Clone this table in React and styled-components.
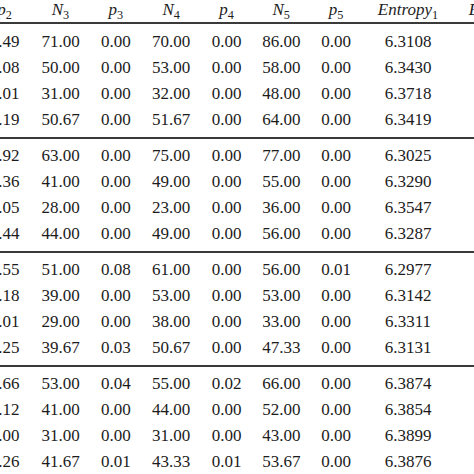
import styled, { createGlobalStyle } from 'styled-components';

const GlobalStyle = createGlobalStyle`
  html, body {
    margin: 0;
    padding: 0;
    background: #ffffff;
    overflow: hidden;
  }
`;

const columns = [
  { key: 'p2', sym: 'p', sub: '2', width: 56.5 },
  { key: 'N3', sym: 'N', sub: '3', width: 55.5 },
  { key: 'p3', sym: 'p', sub: '3', width: 55 },
  { key: 'N4', sym: 'N', sub: '4', width: 55.75 },
  { key: 'p4', sym: 'p', sub: '4', width: 55 },
  { key: 'N5', sym: 'N', sub: '5', width: 54.5 },
  { key: 'p5', sym: 'p', sub: '5', width: 55 },
  { key: 'e1', sym: 'Entropy', sub: '1', width: 89 },
  { key: 'e2', sym: 'Entropy', sub: '2', width: 93 },
];

const tableWidth = columns.reduce((s, c) => s + c.width, 0);

const groups = [
  [
    ['0.49', '71.00', '0.00', '70.00', '0.00', '86.00', '0.00', '6.3108', ''],
    ['0.08', '50.00', '0.00', '53.00', '0.00', '58.00', '0.00', '6.3430', ''],
    ['0.01', '31.00', '0.00', '32.00', '0.00', '48.00', '0.00', '6.3718', ''],
    ['0.19', '50.67', '0.00', '51.67', '0.00', '64.00', '0.00', '6.3419', ''],
  ],
  [
    ['0.92', '63.00', '0.00', '75.00', '0.00', '77.00', '0.00', '6.3025', ''],
    ['0.36', '41.00', '0.00', '49.00', '0.00', '55.00', '0.00', '6.3290', ''],
    ['0.05', '28.00', '0.00', '23.00', '0.00', '36.00', '0.00', '6.3547', ''],
    ['0.44', '44.00', '0.00', '49.00', '0.00', '56.00', '0.00', '6.3287', ''],
  ],
  [
    ['0.55', '51.00', '0.08', '61.00', '0.00', '56.00', '0.01', '6.2977', ''],
    ['0.18', '39.00', '0.00', '53.00', '0.00', '53.00', '0.00', '6.3142', ''],
    ['0.01', '29.00', '0.00', '38.00', '0.00', '33.00', '0.00', '6.3311', ''],
    ['0.25', '39.67', '0.03', '50.67', '0.00', '47.33', '0.00', '6.3131', ''],
  ],
  [
    ['0.66', '53.00', '0.04', '55.00', '0.02', '66.00', '0.00', '6.3874', ''],
    ['0.12', '41.00', '0.00', '44.00', '0.00', '52.00', '0.00', '6.3854', ''],
    ['0.00', '31.00', '0.00', '31.00', '0.00', '43.00', '0.00', '6.3899', ''],
    ['0.26', '41.67', '0.01', '43.33', '0.01', '53.67', '0.00', '6.3876', ''],
  ],
];

const Table = styled.table`
  border-collapse: collapse;
  table-layout: fixed;
  width: ${({ $width }) => $width}px;
  margin-left: -23.75px;
  font-family: 'Liberation Serif', 'Times New Roman', serif;
  font-size: 17px;
  color: #1c1c1c;
`;

const HeadCell = styled.th`
  font-weight: normal;
  font-style: italic;
  text-align: center;
  height: 20px;
  line-height: 20px;
  padding: 0 0 2px 0;
  white-space: nowrap;
  border-bottom: 2px solid #3a3a3a;
`;

const Sub = styled.sub`
  font-style: normal;
  font-size: 0.72em;
  line-height: 0;
  vertical-align: -0.3em;
`;

const Group = styled.tbody`
  border-bottom: ${({ $last }) => ($last ? 'none' : '2px solid #3a3a3a')};

  tr:first-child td {
    padding-top: ${({ $first }) => ($first ? '5px' : '4px')};
  }

  tr:last-child td {
    padding-bottom: 4px;
  }
`;

const Cell = styled.td`
  text-align: center;
  height: 26px;
  line-height: 26px;
  padding: 0;
  white-space: nowrap;
`;

export default function App() {
  return (
    <>
      <GlobalStyle />
      <Table $width={tableWidth}>
        <colgroup>
          {columns.map((c) => (
            <col key={c.key} style={{ width: c.width }} />
          ))}
        </colgroup>
        <thead>
          <tr>
            {columns.map((c) => (
              <HeadCell key={c.key}>
                {c.sym}
                <Sub>{c.sub}</Sub>
              </HeadCell>
            ))}
          </tr>
        </thead>
        {groups.map((rows, gi) => (
          <Group key={gi} $first={gi === 0} $last={gi === groups.length - 1}>
            {rows.map((row, ri) => (
              <tr key={ri}>
                {row.map((v, ci) => (
                  <Cell key={ci}>{v}</Cell>
                ))}
              </tr>
            ))}
          </Group>
        ))}
      </Table>
    </>
  );
}
